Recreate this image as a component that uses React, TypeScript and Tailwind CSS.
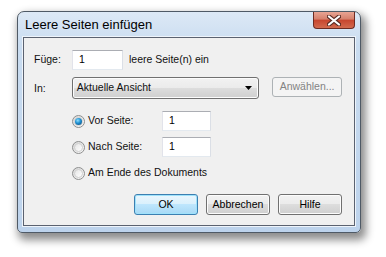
import React from "react";

const font = { fontFamily: '"Liberation Sans", Arial, sans-serif' };

function TextBox({ value, className }: { value: string; className: string }) {
  return (
    <div
      className={`bg-white border border-[#abadb3] border-l-[#e2e3ea] border-r-[#dbdfe6] border-b-[#e3e9ef] flex items-center pl-[6px] text-[10.5px] text-black ${className}`}
    >
      {value}
    </div>
  );
}

function Radio({ checked }: { checked?: boolean }) {
  return (
    <div className="w-[13px] h-[13px] rounded-full border border-[#8e8f8f] bg-gradient-to-br from-[#d8d8d8] to-[#f8f8f8] flex items-center justify-center shrink-0">
      <div className="w-[9px] h-[9px] rounded-full bg-gradient-to-br from-[#e6e6e6] to-[#ffffff] border border-[#d0d0d0] flex items-center justify-center">
        {checked && (
          <div className="w-[7px] h-[7px] rounded-full bg-[radial-gradient(circle_at_40%_35%,#8fe0ff_0%,#1d8ed0_45%,#0b3f6a_100%)]" />
        )}
      </div>
    </div>
  );
}

function Button({ label, primary, disabled, className }: { label: string; primary?: boolean; disabled?: boolean; className: string }) {
  if (disabled) {
    return (
      <div className={`rounded-[3px] border border-[#adb2b5] bg-[#f4f4f4] flex items-center justify-center text-[10.5px] text-[#838383] ${className}`}>
        {label}
      </div>
    );
  }
  return (
    <div
      className={`rounded-[3px] border flex items-center justify-center text-[10.5px] text-black ${
        primary
          ? "border-[#3c7fb1] bg-[linear-gradient(#eaf6fd_0%,#d9f0fc_50%,#bee6fd_50%,#a7d9f5_100%)] shadow-[inset_0_0_0_1px_#9fe2fb]"
          : "border-[#707070] bg-[linear-gradient(#f2f2f2_0%,#ebebeb_50%,#dddddd_50%,#cfcfcf_100%)] shadow-[inset_0_0_0_1px_#fcfcfc]"
      } ${className}`}
    >
      {label}
    </div>
  );
}

export default function App() {
  return (
    <div className="w-[386px] h-[257px] bg-white pt-[11px] pl-[17px]" style={font}>
      <div className="w-[344px] h-[222px] rounded-t-[7px] rounded-b-[5px] border border-[#4f5a66] bg-[linear-gradient(#dde9f6_0%,#c9dcf0_15%,#bdd3ec_100%)] shadow-[3px_5px_9px_2px_rgba(0,0,0,0.45)] flex flex-col">
        <div className="h-[25px] flex items-start justify-between shrink-0">
          <span className="text-[13px] text-black pl-[7px] pt-[6px] leading-[14px]">Leere Seiten einfügen</span>
          <div className="mr-[5px] w-[42px] h-[17px] rounded-b-[4px] border border-t-0 border-[#6d2b22] bg-[linear-gradient(#e8a493_0%,#d5806c_45%,#c7452e_50%,#d26a4e_100%)] flex items-center justify-center">
            <svg width="14" height="11" viewBox="0 0 14 11">
              <path d="M2 1.5 L12 9.5 M12 1.5 L2 9.5" stroke="#5a2a22" strokeWidth="4.2" strokeLinecap="round" />
              <path d="M2 1.5 L12 9.5 M12 1.5 L2 9.5" stroke="#ffffff" strokeWidth="2.2" strokeLinecap="round" />
            </svg>
          </div>
        </div>
        <div className="ml-[5px] mr-[5px] mb-[6px] flex-1 border border-[#5b6270] shadow-[0_0_0_1px_#eef4fb] bg-[#f0f0f0] pt-[12px] pl-[10px] pr-[12px] flex flex-col text-[10.5px] text-[#111]">
          <div className="flex items-center h-[20px]">
            <span className="w-[38px]">Füge:</span>
            <TextBox value="1" className="w-[51px] h-[20px]" />
            <span className="ml-[6px]">leere Seite(n) ein</span>
          </div>
          <div className="flex items-start mt-[7px]">
            <span className="w-[38px] mt-[4px]">In:</span>
            <div className="w-[188px] h-[22px] rounded-[3px] border border-[#707070] bg-[linear-gradient(#f2f2f2_0%,#ebebeb_50%,#dddddd_50%,#cfcfcf_100%)] shadow-[inset_0_0_0_1px_#fcfcfc] flex items-center justify-between pl-[4px] pr-[6px]">
              <span>Aktuelle Ansicht</span>
              <svg width="7" height="4" viewBox="0 0 7 4">
                <path d="M0 0 L7 0 L3.5 4 Z" fill="#000" />
              </svg>
            </div>
            <Button label="Anwählen..." disabled className="ml-[13px] w-[70px] h-[20px]" />
          </div>
          <div className="flex flex-col pl-[38px] mt-[12px]">
            <div className="flex items-center h-[20px]">
              <Radio checked />
              <span className="ml-[3px] w-[74px]">Vor Seite:</span>
              <TextBox value="1" className="w-[49px] h-[20px]" />
            </div>
            <div className="flex items-center h-[20px] mt-[6px]">
              <Radio />
              <span className="ml-[3px] w-[74px]">Nach Seite:</span>
              <TextBox value="1" className="w-[49px] h-[20px]" />
            </div>
            <div className="flex items-center h-[20px] mt-[6px]">
              <Radio />
              <span className="ml-[3px]">Am Ende des Dokuments</span>
            </div>
          </div>
          <div className="flex justify-end mt-[11px] gap-[8px]">
            <Button label="OK" primary className="w-[64px] h-[21px]" />
            <Button label="Abbrechen" className="w-[64px] h-[21px]" />
            <Button label="Hilfe" className="w-[64px] h-[21px]" />
          </div>
        </div>
      </div>
    </div>
  );
}
